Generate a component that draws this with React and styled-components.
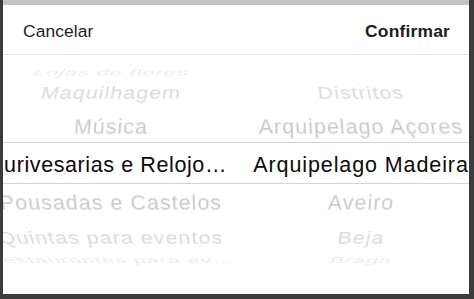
import React from "react";
import styled, { createGlobalStyle } from "styled-components";

const Global = createGlobalStyle`
  html, body { margin: 0; padding: 0; }
  body {
    background: #3c3c3c;
    font-family: "Liberation Sans", Arial, sans-serif;
    -webkit-font-smoothing: antialiased;
  }
`;

const Frame = styled.div`
  width: 474px;
  height: 299px;
  box-sizing: border-box;
  padding: 0 5px 5px 3px;
  display: flex;
  flex-direction: column;
  background: #3c3c3c;
`;

const TopBar = styled.div`
  height: 5px;
  flex: none;
  background: #c3c3c3;
`;

const Panel = styled.div`
  flex: 1;
  background: #ffffff;
  overflow: hidden;
  display: flex;
  flex-direction: column;
`;

const Header = styled.div`
  height: 50px;
  flex: none;
  box-sizing: border-box;
  border-bottom: 1px solid #e4e4e4;
  display: flex;
  align-items: center;
  justify-content: space-between;
  padding: 3px 19px 0 20px;
`;

const HeaderButton = styled.span`
  font-size: 17.4px;
  color: #1d1d1d;
  font-weight: ${(p) => (p.$bold ? 700 : 400)};
  letter-spacing: ${(p) => (p.$bold ? "0.2px" : "0.1px")};
`;

const Wheel = styled.div`
  display: flex;
  flex-direction: column;
  padding-top: 5px;
`;

const Row = styled.div`
  display: grid;
  grid-template-columns: 232px 230px;
  column-gap: 19px;
  margin-left: -8px;
  width: 490px;
  box-sizing: border-box;
  height: ${(p) => p.$h}px;
  padding-top: ${(p) => (p.$selected ? 6 : 0)}px;
  border-top: ${(p) => (p.$selected ? "1px solid #d4d4d4" : "none")};
  border-bottom: ${(p) => (p.$selected ? "1px solid #d4d4d4" : "none")};
`;

const Cell = styled.div`
  display: flex;
  align-items: center;
  justify-content: ${(p) => (p.$end ? "flex-end" : "center")};
  min-width: 0;
  transform-origin: ${(p) => p.$ox}px 50%;
`;

const Label = styled.span`
  white-space: nowrap;
  font-size: 21.5px;
  line-height: 1;
  color: ${(p) => p.$color};
  letter-spacing: ${(p) => p.$ls}px;
`;

const ANGLE = { "-3": 66, "-2": 38, "-1": 18, "0": 0, "1": -18, "2": -38, "3": -66 };
const COLOR = { "-3": "#ebebeb", "-2": "#dadada", "-1": "#cacaca", "0": "#0a0a0a", "1": "#cacaca", "2": "#dadada", "3": "#ebebeb" };

const rows = [
  { pos: -3, h: 24, dy: 1, left: "Lojas de flores", right: "" },
  { pos: -2, h: 28, dy: -4, left: "Maquilhagem", right: "Distritos" },
  { pos: -1, h: 30, dy: 1, left: "Música", right: "Arquipelago Açores" },
  { pos: 0, h: 42, dy: 0, left: "Ourivesarias e Relojo…", right: "Arquipelago Madeira" },
  { pos: 1, h: 36, dy: 2, left: "Pousadas e Castelos", right: "Aveiro" },
  { pos: 2, h: 32, dy: 3, left: "Quintas para eventos", right: "Beja" },
  { pos: 3, h: 20, dy: -2, left: "Restaurantes para ev…", right: "Braga" },
];

function WheelCell({ text, pos, dy, ox, end, ls }) {
  const a = ANGLE[String(pos)];
  const transform = pos === 0 ? "none" : `translateY(${dy}px) perspective(500px) rotateX(${a}deg)`;
  return (
    <Cell $ox={ox} $end={end} style={{ transform }}>
      <Label $color={COLOR[String(pos)]} $ls={ls}>{text}</Label>
    </Cell>
  );
}

export default function App() {
  return (
    <>
      <Global />
      <Frame>
        <TopBar />
        <Panel>
          <Header>
            <HeaderButton>Cancelar</HeaderButton>
            <HeaderButton $bold>Confirmar</HeaderButton>
          </Header>
          <Wheel>
            {rows.map((r) => (
              <Row key={r.pos} $h={r.h} $selected={r.pos === 0}>
                <WheelCell
                  text={r.left}
                  pos={r.pos}
                  dy={r.dy}
                  ox={241}
                  end={r.pos === 0}
                  ls={r.pos === 0 ? 0.6 : 1}
                />
                <WheelCell
                  text={r.right}
                  pos={r.pos}
                  dy={r.dy}
                  ox={-10}
                  ls={r.pos === 0 ? 0.9 : 1}
                />
              </Row>
            ))}
          </Wheel>
        </Panel>
      </Frame>
    </>
  );
}
